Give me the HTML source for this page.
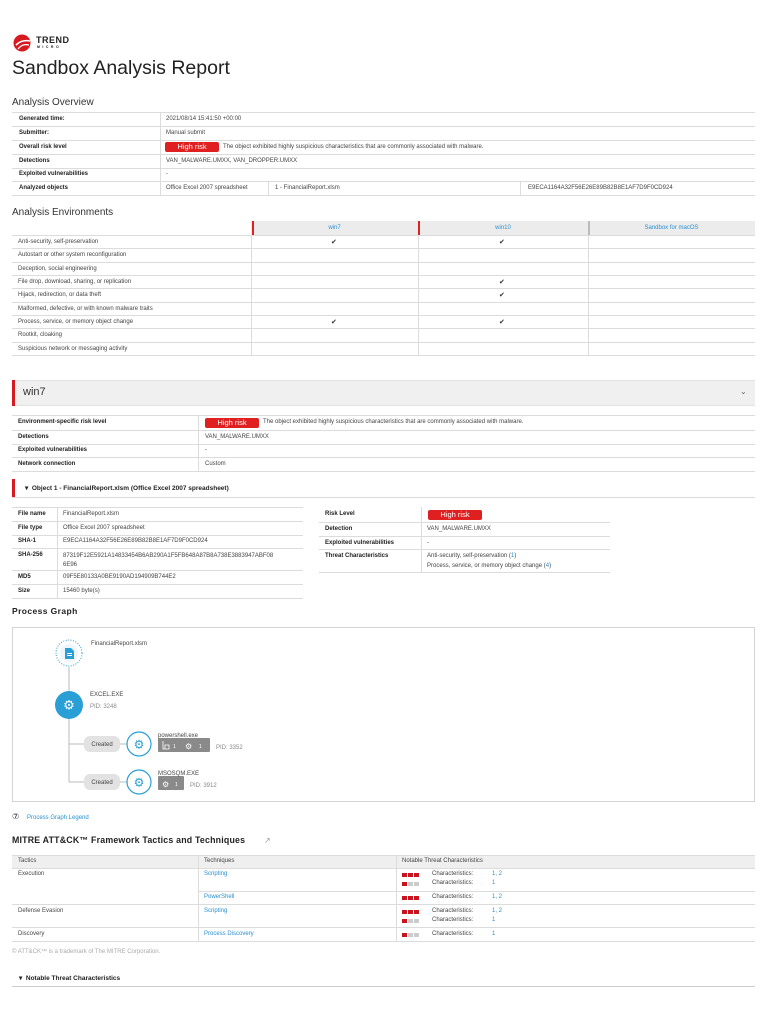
<!DOCTYPE html>
<html><head><meta charset="utf-8"><style>
*{margin:0;padding:0;box-sizing:border-box}
body{width:768px;height:1024px;background:#fff;font-family:"Liberation Sans",sans-serif;color:#333;position:relative;overflow:hidden}
.a{position:absolute;white-space:nowrap}
.t{font-size:6px;color:#444}
.b{font-weight:bold;color:#222}
.hl{position:absolute;height:1px;background:#dcdcdc}
.vl{position:absolute;width:1px;background:#dcdcdc}
.risk{position:absolute;background:#e02020;color:#fff;font-size:7.5px;text-align:center;border-radius:2px}
.lk{color:#2a8fd0}
.ck{position:absolute;font-size:7px;color:#333}
.sq{display:inline-block;width:5px;height:4px;margin-right:1px;background:#c8141e}
.sg{background:#ccc}
</style></head><body>

<svg class="a" style="left:13px;top:34px" width="20" height="20" viewBox="0 0 20 20"><circle cx="9" cy="9" r="8.5" fill="#d71920"/><path d="M3 11 C7 7 12 6 17 7" stroke="#fff" stroke-width="1.6" fill="none"/><path d="M5 15 C8 11 12 10 16 11" stroke="#fff" stroke-width="1.2" fill="none"/></svg>
<div class="a b" style="left:36px;top:35px;font-size:9px;letter-spacing:0.5px">TREND</div>
<div class="a b" style="left:37px;top:45px;font-size:3.5px;letter-spacing:2.5px">MICRO</div>
<div class="a" style="left:12px;top:57px;font-size:19.5px;color:#222">Sandbox Analysis Report</div>

<div class="a" style="left:12px;top:97px;font-size:10px;color:#333">Analysis Overview</div>
<div class="hl" style="left:12px;top:112px;width:743px"></div>
<div class="hl" style="left:12px;top:126px;width:743px"></div>
<div class="hl" style="left:12px;top:140px;width:743px"></div>
<div class="hl" style="left:12px;top:154px;width:743px"></div>
<div class="hl" style="left:12px;top:168px;width:743px"></div>
<div class="hl" style="left:12px;top:181px;width:743px"></div>
<div class="hl" style="left:12px;top:195px;width:743px"></div>
<div class="vl" style="left:160px;top:112px;height:83px"></div>
<div class="vl" style="left:268px;top:181px;height:14px"></div>
<div class="vl" style="left:520px;top:181px;height:14px"></div>
<div class="a t b" style="left:19px;top:116px">Generated time:</div>
<div class="a t b" style="left:19px;top:130px">Submitter:</div>
<div class="a t b" style="left:19px;top:144px">Overall risk level</div>
<div class="a t b" style="left:19px;top:158px">Detections</div>
<div class="a t b" style="left:19px;top:171px">Exploited vulnerabilities</div>
<div class="a t b" style="left:19px;top:185px">Analyzed objects</div>
<div class="a t" style="left:166px;top:116px">2021/08/14 15:41:50 +00:00</div>
<div class="a t" style="left:166px;top:130px">Manual submit</div>
<div class="risk" style="left:165px;top:142px;width:54px;height:10px;line-height:10px">High risk</div>
<div class="a t" style="left:223px;top:144px">The object exhibited highly suspicious characteristics that are commonly associated with malware.</div>
<div class="a t" style="left:166px;top:158px">VAN_MALWARE.UMXX, VAN_DROPPER.UMXX</div>
<div class="a t" style="left:166px;top:171px">-</div>
<div class="a t" style="left:166px;top:185px">Office Excel 2007 spreadsheet</div>
<div class="a t" style="left:275px;top:185px">1 - FinancialReport.xlsm</div>
<div class="a t" style="left:528px;top:185px">E9ECA1164A32F56E26E89B82B8E1AF7D9F0CD924</div>

<div class="a" style="left:12px;top:207px;font-size:10px">Analysis Environments</div>
<div class="a" style="left:251px;top:221px;width:504px;height:14px;background:#ececec"></div>
<div class="a" style="left:252px;top:221px;width:2px;height:14px;background:#d22"></div>
<div class="a" style="left:418px;top:221px;width:2px;height:14px;background:#d22"></div>
<div class="a" style="left:588px;top:221px;width:2px;height:14px;background:#bbb"></div>
<div class="a t lk" style="left:251px;top:225px;width:167px;text-align:center">win7</div>
<div class="a t lk" style="left:418px;top:225px;width:170px;text-align:center">win10</div>
<div class="a t lk" style="left:588px;top:225px;width:167px;text-align:center">Sandbox for macOS</div>
<div class="vl" style="left:251px;top:235px;height:120px"></div>
<div class="vl" style="left:418px;top:235px;height:120px"></div>
<div class="vl" style="left:588px;top:235px;height:120px"></div>
<div class="hl" style="left:12px;top:235px;width:743px"></div>
<div class="hl" style="left:12px;top:248px;width:743px"></div>
<div class="hl" style="left:12px;top:262px;width:743px"></div>
<div class="hl" style="left:12px;top:275px;width:743px"></div>
<div class="hl" style="left:12px;top:288px;width:743px"></div>
<div class="hl" style="left:12px;top:302px;width:743px"></div>
<div class="hl" style="left:12px;top:315px;width:743px"></div>
<div class="hl" style="left:12px;top:328px;width:743px"></div>
<div class="hl" style="left:12px;top:342px;width:743px"></div>
<div class="hl" style="left:12px;top:355px;width:743px"></div>
<div class="a t" style="left:18px;top:239px">Anti-security, self-preservation</div>
<div class="a t" style="left:18px;top:252px">Autostart or other system reconfiguration</div>
<div class="a t" style="left:18px;top:266px">Deception, social engineering</div>
<div class="a t" style="left:18px;top:279px">File drop, download, sharing, or replication</div>
<div class="a t" style="left:18px;top:292px">Hijack, redirection, or data theft</div>
<div class="a t" style="left:18px;top:306px">Malformed, defective, or with known malware traits</div>
<div class="a t" style="left:18px;top:319px">Process, service, or memory object change</div>
<div class="a t" style="left:18px;top:332px">Rootkit, cloaking</div>
<div class="a t" style="left:18px;top:346px">Suspicious network or messaging activity</div>
<div class="ck" style="left:331px;top:238px">✔</div>
<div class="ck" style="left:499px;top:238px">✔</div>
<div class="ck" style="left:499px;top:278px">✔</div>
<div class="ck" style="left:499px;top:291px">✔</div>
<div class="ck" style="left:331px;top:318px">✔</div>
<div class="ck" style="left:499px;top:318px">✔</div>

<div class="a" style="left:12px;top:380px;width:743px;height:26px;background:#f0f0f0;border-top:1px solid #e2e2e2;border-bottom:1px solid #e2e2e2"></div>
<div class="a" style="left:12px;top:380px;width:3px;height:26px;background:#d71920"></div>
<div class="a" style="left:23px;top:386px;font-size:11px;color:#333">win7</div>
<div class="a" style="left:740px;top:387px;font-size:8px;color:#666">⌄</div>

<div class="hl" style="left:12px;top:415px;width:743px"></div>
<div class="hl" style="left:12px;top:430px;width:743px"></div>
<div class="hl" style="left:12px;top:444px;width:743px"></div>
<div class="hl" style="left:12px;top:457px;width:743px"></div>
<div class="hl" style="left:12px;top:471px;width:743px"></div>
<div class="vl" style="left:198px;top:415px;height:56px"></div>
<div class="a t b" style="left:18px;top:419px">Environment-specific risk level</div>
<div class="a t b" style="left:18px;top:434px">Detections</div>
<div class="a t b" style="left:18px;top:447px">Exploited vulnerabilities</div>
<div class="a t b" style="left:18px;top:461px">Network connection</div>
<div class="risk" style="left:205px;top:418px;width:54px;height:10px;line-height:10px">High risk</div>
<div class="a t" style="left:263px;top:419px">The object exhibited highly suspicious characteristics that are commonly associated with malware.</div>
<div class="a t" style="left:205px;top:434px">VAN_MALWARE.UMXX</div>
<div class="a t" style="left:205px;top:447px">-</div>
<div class="a t" style="left:205px;top:461px">Custom</div>

<div class="a" style="left:12px;top:479px;width:3px;height:18px;background:#d71920"></div>
<div class="hl" style="left:12px;top:497px;width:743px"></div>
<div class="a b" style="left:25px;top:484px;font-size:6.5px">▾&nbsp;&nbsp;Object 1 - FinancialReport.xlsm (Office Excel 2007 spreadsheet)</div>

<div class="hl" style="left:12px;top:507px;width:291px"></div>
<div class="hl" style="left:12px;top:521px;width:291px"></div>
<div class="hl" style="left:12px;top:535px;width:291px"></div>
<div class="hl" style="left:12px;top:548px;width:291px"></div>
<div class="hl" style="left:12px;top:570px;width:291px"></div>
<div class="hl" style="left:12px;top:584px;width:291px"></div>
<div class="hl" style="left:12px;top:598px;width:291px"></div>
<div class="vl" style="left:57px;top:507px;height:91px"></div>
<div class="a t b" style="left:18px;top:511px">File name</div>
<div class="a t b" style="left:18px;top:525px">File type</div>
<div class="a t b" style="left:18px;top:538px">SHA-1</div>
<div class="a t b" style="left:18px;top:552px">SHA-256</div>
<div class="a t b" style="left:18px;top:574px">MD5</div>
<div class="a t b" style="left:18px;top:588px">Size</div>
<div class="a t" style="left:63px;top:511px">FinancialReport.xlsm</div>
<div class="a t" style="left:63px;top:525px">Office Excel 2007 spreadsheet</div>
<div class="a t" style="left:63px;top:538px">E9ECA1164A32F56E26E89B82B8E1AF7D9F0CD924</div>
<div class="a t" style="left:63px;top:552px;line-height:9px">87319F12E5921A14833454B6AB290A1F5FB648A87B8A738E3883947ABF08<br>6E96</div>
<div class="a t" style="left:63px;top:574px">09F5E80133A0BE9190AD194909B744E2</div>
<div class="a t" style="left:63px;top:588px">15460 byte(s)</div>

<div class="hl" style="left:319px;top:522px;width:291px"></div>
<div class="hl" style="left:319px;top:536px;width:291px"></div>
<div class="hl" style="left:319px;top:549px;width:291px"></div>
<div class="hl" style="left:319px;top:572px;width:291px"></div>
<div class="vl" style="left:421px;top:507px;height:65px"></div>
<div class="a t b" style="left:325px;top:511px">Risk Level</div>
<div class="a t b" style="left:325px;top:526px">Detection</div>
<div class="a t b" style="left:325px;top:540px">Exploited vulnerabilities</div>
<div class="a t b" style="left:325px;top:553px">Threat Characteristics</div>
<div class="risk" style="left:428px;top:510px;width:54px;height:10px;line-height:10px">High risk</div>
<div class="a t" style="left:427px;top:526px">VAN_MALWARE.UMXX</div>
<div class="a t" style="left:427px;top:540px">-</div>
<div class="a t" style="left:427px;top:553px">Anti-security, self-preservation (<span class="lk">1</span>)</div>
<div class="a t" style="left:427px;top:563px">Process, service, or memory object change (<span class="lk">4</span>)</div>

<div class="a b" style="left:12px;top:606px;font-size:8.5px;letter-spacing:0.4px">Process Graph</div>

<div class="a" style="left:12px;top:627px;width:743px;height:175px;border:1px solid #d4d4d4"></div>
<svg class="a" style="left:12px;top:627px" width="220" height="175">
<line x1="57" y1="40" x2="57" y2="155" stroke="#bbb" stroke-width="1"/>
<line x1="57" y1="117" x2="85" y2="117" stroke="#bbb"/>
<line x1="57" y1="155" x2="85" y2="155" stroke="#bbb"/>
<line x1="108" y1="117" x2="115" y2="117" stroke="#bbb"/>
<line x1="108" y1="155" x2="115" y2="155" stroke="#bbb"/>
<circle cx="57" cy="26" r="13" fill="#fff" stroke="#2a9fd6" stroke-dasharray="1 1.5"/>
<circle cx="57" cy="26" r="9" fill="#eef6fb"/>
<path d="M53 21 h6 l3 3 v8 h-9z" fill="#2a9fd6"/>
<rect x="55" y="26" width="5" height="1" fill="#fff"/><rect x="55" y="28" width="5" height="1" fill="#fff"/>
<circle cx="57" cy="78" r="14" fill="#2a9fd6"/>
<text x="57" y="82.5" text-anchor="middle" font-size="13" fill="#fff" font-family="DejaVu Sans">⚙</text>
<rect x="72" y="109" width="36" height="16" rx="6" fill="#e2e2e2"/>
<text x="90" y="119" text-anchor="middle" font-size="6" fill="#444" font-family="Liberation Sans">Created</text>
<rect x="72" y="147" width="36" height="16" rx="6" fill="#e2e2e2"/>
<text x="90" y="157" text-anchor="middle" font-size="6" fill="#444" font-family="Liberation Sans">Created</text>
<circle cx="127" cy="117" r="12" fill="#fff" stroke="#2a9fd6" stroke-width="1.2"/>
<text x="127" y="121.5" text-anchor="middle" font-size="12" fill="#2a9fd6" font-family="DejaVu Sans">⚙</text>
<circle cx="127" cy="155" r="12" fill="#fff" stroke="#2a9fd6" stroke-width="1.2"/>
<text x="127" y="159.5" text-anchor="middle" font-size="12" fill="#2a9fd6" font-family="DejaVu Sans">⚙</text>
<rect x="146" y="111" width="52" height="14" rx="1" fill="#8a8a8a"/>
<rect x="146" y="149" width="26" height="14" rx="1" fill="#8a8a8a"/>
<path d="M151 114 v8 h6 M153 118 h4 v4 h-4z" stroke="#fff" fill="none" stroke-width="0.8"/>
<text x="161" y="121" font-size="5" fill="#fff" font-family="Liberation Sans">1</text>
<text x="173" y="122" font-size="8" fill="#fff" font-family="DejaVu Sans">⚙</text>
<text x="187" y="121" font-size="5" fill="#fff" font-family="Liberation Sans">1</text>
<text x="150" y="160" font-size="8" fill="#fff" font-family="DejaVu Sans">⚙</text>
<text x="163" y="159" font-size="5" fill="#fff" font-family="Liberation Sans">1</text>
</svg>
<div class="a t" style="left:91px;top:641px">FinancialReport.xlsm</div>
<div class="a t" style="left:90px;top:692px">EXCEL.EXE</div>
<div class="a t" style="left:90px;top:704px;color:#888">PID: 3248</div>
<div class="a t" style="left:158px;top:733px">powershell.exe</div>
<div class="a t" style="left:216px;top:745px;color:#888">PID: 3352</div>
<div class="a t" style="left:158px;top:771px">MSOSQM.EXE</div>
<div class="a t" style="left:190px;top:783px;color:#888">PID: 3912</div>

<div class="a" style="left:12px;top:812px;font-size:8px;color:#222">⑦</div>
<div class="a t lk" style="left:27px;top:815px">Process Graph Legend</div>

<div class="a b" style="left:12px;top:835px;font-size:8.8px;letter-spacing:0.2px">MITRE ATT&amp;CK™ Framework Tactics and Techniques</div>
<div class="a" style="left:264px;top:836px;font-size:8px;color:#999">↗</div>

<div class="a" style="left:12px;top:855px;width:743px;height:13px;background:#efefef"></div>
<div class="hl" style="left:12px;top:855px;width:743px"></div>
<div class="hl" style="left:12px;top:868px;width:743px"></div>
<div class="hl" style="left:198px;top:891px;width:557px"></div>
<div class="hl" style="left:12px;top:904px;width:743px"></div>
<div class="hl" style="left:12px;top:927px;width:743px"></div>
<div class="hl" style="left:12px;top:941px;width:743px"></div>
<div class="vl" style="left:198px;top:855px;height:86px"></div>
<div class="vl" style="left:396px;top:855px;height:86px"></div>
<div class="a t" style="left:18px;top:858px">Tactics</div>
<div class="a t" style="left:204px;top:858px">Techniques</div>
<div class="a t" style="left:402px;top:858px">Notable Threat Characteristics</div>
<div class="a t" style="left:18px;top:871px">Execution</div>
<div class="a t" style="left:18px;top:908px">Defense Evasion</div>
<div class="a t" style="left:18px;top:931px">Discovery</div>
<div class="a t lk" style="left:204px;top:871px">Scripting</div>
<div class="a t lk" style="left:204px;top:894px">PowerShell</div>
<div class="a t lk" style="left:204px;top:908px">Scripting</div>
<div class="a t lk" style="left:204px;top:931px">Process Discovery</div>

<div class="a" style="left:402px;top:873px;line-height:0"><span class="sq"></span><span class="sq"></span><span class="sq"></span></div>
<div class="a" style="left:402px;top:882px;line-height:0"><span class="sq"></span><span class="sq sg"></span><span class="sq sg"></span></div>
<div class="a" style="left:402px;top:896px;line-height:0"><span class="sq"></span><span class="sq"></span><span class="sq"></span></div>
<div class="a" style="left:402px;top:910px;line-height:0"><span class="sq"></span><span class="sq"></span><span class="sq"></span></div>
<div class="a" style="left:402px;top:919px;line-height:0"><span class="sq"></span><span class="sq sg"></span><span class="sq sg"></span></div>
<div class="a" style="left:402px;top:933px;line-height:0"><span class="sq"></span><span class="sq sg"></span><span class="sq sg"></span></div>

<div class="a t" style="left:432px;top:871px">Characteristics:</div><div class="a t lk" style="left:492px;top:871px">1, 2</div>
<div class="a t" style="left:432px;top:880px">Characteristics:</div><div class="a t lk" style="left:492px;top:880px">1</div>
<div class="a t" style="left:432px;top:894px">Characteristics:</div><div class="a t lk" style="left:492px;top:894px">1, 2</div>
<div class="a t" style="left:432px;top:908px">Characteristics:</div><div class="a t lk" style="left:492px;top:908px">1, 2</div>
<div class="a t" style="left:432px;top:917px">Characteristics:</div><div class="a t lk" style="left:492px;top:917px">1</div>
<div class="a t" style="left:432px;top:931px">Characteristics:</div><div class="a t lk" style="left:492px;top:931px">1</div>

<div class="a t" style="left:12px;top:949px;color:#aaa">© ATT&amp;CK™ is a trademark of The MITRE Corporation.</div>

<div class="a b" style="left:19px;top:974px;font-size:6.5px">▾&nbsp;&nbsp;Notable Threat Characteristics</div>
<div class="hl" style="left:12px;top:986px;width:743px;background:#ccc"></div>
</body></html>
